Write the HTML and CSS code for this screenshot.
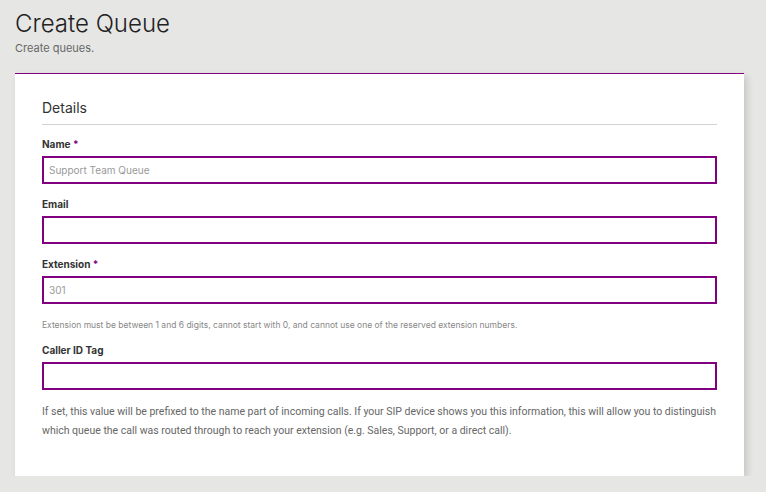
FILE: index.html
```html
<!DOCTYPE html>
<html lang="en">
<head>
    <meta charset="UTF-8">
    <meta name="viewport" content="width=device-width, initial-scale=1.0">
    <title>Create Queue</title>
    <link rel="stylesheet" href="styles.css">
</head>
<body>
    <!-- Page header -->
    <header class="page-header">
        <h1>Create Queue</h1>
        <p>Create queues.</p>
    </header>

    <!-- Form card -->
    <section class="card">
        <h2 class="card-title">Details</h2>

        <div class="field">
            <label for="name">Name <span class="req">*</span></label>
            <input type="text" id="name" placeholder="Support Team Queue">
        </div>

        <div class="field">
            <label for="email">Email</label>
            <input type="text" id="email">
        </div>

        <div class="field">
            <label for="ext">Extension <span class="req">*</span></label>
            <input type="text" id="ext" placeholder="301">
            <p class="hint">Extension must be between 1 and 6 digits, cannot start with 0, and cannot use one of the reserved extension numbers.</p>
        </div>

        <div class="field">
            <label for="cid">Caller ID Tag</label>
            <input type="text" id="cid">
            <p class="help">If set, this value will be prefixed to the name part of incoming calls. If your SIP device shows you this information, this will allow you to distinguish which queue the call was routed through to reach your extension (e.g. Sales, Support, or a direct call).</p>
        </div>
    </section>
</body>
</html>
```

FILE: styles.css
```css
* {
    margin: 0;
    padding: 0;
    box-sizing: border-box;
}

body {
    font-family: Inter, 'Open Sans', sans-serif;
    background: #e6e6e5;
    color: #333;
    padding: 10px 22px 0 15px;
}

/* Header */
.page-header h1 {
    font-size: 24px;
    font-weight: 300;
    color: #222;
    line-height: 28px;
}

.page-header p {
    font-size: 11px;
    color: #666;
    margin-top: 3px;
}

/* Card */
.card {
    background: #fff;
    border-top: 1px solid #800080;
    margin-top: 18px;
    padding: 25px 27px 22px 27px;
    box-shadow: 3px 3px 7px rgba(0, 0, 0, 0.14);
}

.card-title {
    font-size: 14px;
    font-weight: 400;
    color: #333;
    padding-bottom: 8px;
    border-bottom: 1px solid #d3d3d3;
    margin-bottom: 13px;
}

.field {
    margin-bottom: 14px;
}

.field label {
    display: block;
    font-size: 10px;
    font-weight: 700;
    color: #333;
    margin-bottom: 6px;
}

.req {
    color: #800080;
}

.field input {
    display: block;
    width: 100%;
    height: 28px;
    border: 2px solid #800080;
    padding: 0 5px;
    font-family: inherit;
    font-size: 10px;
    color: #333;
    outline: none;
}

.field input::placeholder {
    color: #999;
}

.hint {
    font-size: 8.5px;
    color: #888;
    margin-top: 16px;
}

.help {
    font-family: 'Liberation Sans Narrow', 'Roboto', sans-serif;
    font-size: 10.5px;
    line-height: 19px;
    color: #666;
    margin-top: 12px;
}
```
